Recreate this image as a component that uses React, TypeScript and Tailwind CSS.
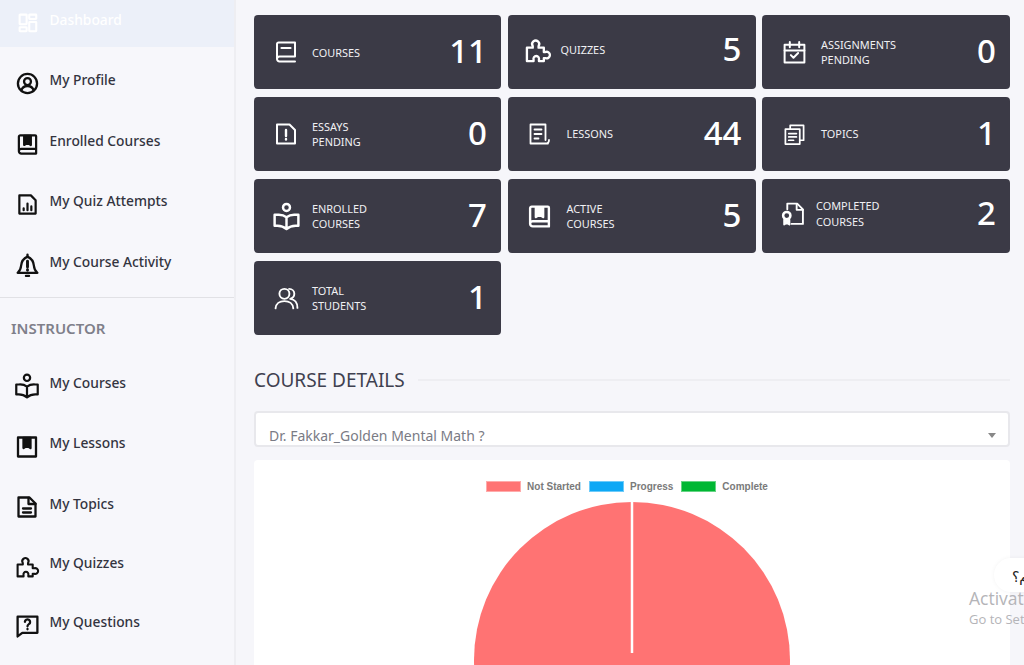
import React from "react";

type IP = { className?: string };
const S = ({ className, children, w = 1.9 }: IP & { children: React.ReactNode; w?: number }) => (
  <svg viewBox="0 0 24 24" fill="none" stroke="currentColor" strokeWidth={w} strokeLinecap="round" strokeLinejoin="round" className={className}>
    {children}
  </svg>
);

const DashIcon = ({ className }: IP) => (
  <S className={className} w={2.4}>
    <rect x="3" y="3" width="8" height="11" rx="0.5" /><rect x="14" y="3" width="8" height="5" rx="0.5" />
    <rect x="3" y="17.5" width="8" height="4.5" rx="0.5" /><rect x="14" y="11.5" width="8" height="10.5" rx="0.5" />
  </S>
);
const ProfileIcon = ({ className }: IP) => (
  <S className={className} w={2.4}>
    <circle cx="12" cy="12" r="10" /><circle cx="12" cy="10" r="3.6" /><path d="M5.5 19.2c1-3 3.5-4.6 6.5-4.6s5.5 1.6 6.5 4.6" />
  </S>
);
const BookMarkIcon = ({ className }: IP) => (
  <S className={className} w={2.3}>
    <path d="M3 19V4a1.5 1.5 0 0 1 1.500-1.500h15.500a1 1 0 0 1 1 1V21.500H5.500A2.500 2.500 0 0 1 3 19a2.500 2.500 0 0 1 2.500-2.500H21" />
    <path d="M8.500 3v9.500l3.500-2.200 3.500 2.200V3z" fill="currentColor" />
  </S>
);
const BookPlainIcon = ({ className }: IP) => (
  <S className={className} w={2}>
    <path d="M3 19V4a1.500 1.500 0 0 1 1.500-1.500H21v14H5.500A2.500 2.500 0 0 0 3 19a2.500 2.500 0 0 0 2.500 2.500H21" />
    <path d="M7.500 8h9" strokeWidth="2.200" />
  </S>
);
const ChartDocIcon = ({ className }: IP) => (
  <S className={className} w={2.3}>
    <path d="M3.500 2.500h12l5 5v14h-17z" /><path d="M8 18v-2M12 18v-7M16 18v-4" />
  </S>
);
const BellIcon = ({ className }: IP) => (
  <S className={className} w={2.2}>
    <path d="M2.500 19c2-1.500 3-3 3.300-6.500.3-4 1.700-7 6.200-9 4.500 2 5.900 5 6.200 9 .3 3.500 1.300 5 3.300 6.500z" />
    <path d="M12 8v5.500M12 16v.5" strokeWidth="2.800" />
    <path d="M10.500 22h3M12 1.500v1.500" />
  </S>
);
const ReaderIcon = ({ className }: IP) => (
  <S className={className} w={1.9}>
    <circle cx="12" cy="5" r="2.700" />
    <path d="M12 12.500c-2-1.500-4.500-2-7-1.800H2.800v8.500H5c2.500 0 5 .8 7 2.500 2-1.700 4.500-2.500 7-2.500h2.200v-8.500H19c-2.500-.2-5 .3-7 1.800zM12 12.500V21" />
  </S>
);
const LessonBookIcon = ({ className }: IP) => (
  <S className={className} w={2.3}>
    <rect x="3" y="2.500" width="18" height="19" /><path d="M8.500 3v10l3.500-2.300 3.500 2.300V3z" fill="currentColor" />
  </S>
);
const DocIcon = ({ className }: IP) => (
  <S className={className} w={2.3}>
    <path d="M3.500 2.500h11l6 6v13h-17z" /><path d="M13.500 3v6h7M8 13.500h8M8 17.500h8" />
  </S>
);
const PuzzleIcon = ({ className }: IP) => (
  <S className={className} w={2}>
    <path d="M2.500 10h5V8.600a3 3 0 1 1 5 0V10h4.500v3.700h1.500a2.800 2.800 0 1 1 0 5.300H17v2.500h-4.200v-1.300a2.400 2.400 0 1 0-4.600 0v1.300H2.500z" />
  </S>
);
const QuestionIcon = ({ className }: IP) => (
  <S className={className} w={2.200}>
    <path d="M2.500 3.500h19v15.500H7l-4.500 3.500z" />
    <path d="M9.500 8.500a2.500 2.500 0 1 1 3.800 2.200c-.9.600-1.300 1-1.300 2M12 15.300v.3" />
  </S>
);
const CalendarIcon = ({ className }: IP) => (
  <S className={className} w={1.900}>
    <rect x="2.500" y="4.500" width="19" height="17" /><path d="M2.500 10h19M7.500 2v5M16.500 2v5M8.500 14.500l2.500 2.500 4.500-4.500" />
  </S>
);
const EssayIcon = ({ className }: IP) => (
  <S className={className} w={2}>
    <path d="M3 2.500h12.500l5.500 5.500v13.500H3z" /><path d="M12 8v6M12 17v.5" strokeWidth="2.400" />
  </S>
);
const LessonsIcon = ({ className }: IP) => (
  <S className={className} w={1.800}>
    <path d="M17.500 18V2.500h-15V21.500h17.500M8 21.500h9.500c2 0 3.500-1 3.500-3.500" /><path d="M6.500 7.500h7M6.500 12h7M6.500 16.500h4" />
  </S>
);
const TopicsIcon = ({ className }: IP) => (
  <S className={className} w={1.800}>
    <path d="M7.500 6V2.500h14V18h-4" /><rect x="2.500" y="6.500" width="15" height="15.500" /><path d="M6 11h8M6 14.500h8M6 18h5" />
  </S>
);
const CertIcon = ({ className }: IP) => (
  <S className={className} w={1.800}>
    <path d="M7 8V2.500h9.500L22 8v14H11" /><path d="M16 3v5.500h6" />
    <circle cx="6.500" cy="14" r="3.500" strokeWidth="2.400" /><path d="M4 18v4.500l2.500-1.500L9 22.500V18" fill="currentColor" />
  </S>
);
const UsersIcon = ({ className }: IP) => (
  <S className={className} w={1.800}>
    <circle cx="10" cy="7.500" r="4.800" /><path d="M1.500 21.500c.3-4.500 3.800-7 8.500-7s8.200 2.500 8.500 7" />
    <path d="M14.500 2.800c3 0 5 2 5 4.700s-2 4.300-4 4.800c4.500.4 7 4 7 8.700" />
  </S>
);

type Row = { label: string; Icon: (p: IP) => React.ReactElement; icon: string; row: string };
const top: Row[] = [
  { label: "My Profile", Icon: ProfileIcon, icon: "w-[23px] h-[23px]", row: "h-[60.700px]" },
  { label: "Enrolled Courses", Icon: BookMarkIcon, icon: "w-[23px] h-[23px]", row: "h-[60.700px]" },
  { label: "My Quiz Attempts", Icon: ChartDocIcon, icon: "w-[23px] h-[23px]", row: "h-[60.700px]" },
  { label: "My Course Activity", Icon: BellIcon, icon: "w-[25px] h-[25px]", row: "h-[60.700px]" },
];
const instr: Row[] = [
  { label: "My Courses", Icon: ReaderIcon, icon: "w-[28px] h-[28px]", row: "h-[60.500px]" },
  { label: "My Lessons", Icon: LessonBookIcon, icon: "w-[24px] h-[24px]", row: "h-[60.500px]" },
  { label: "My Topics", Icon: DocIcon, icon: "w-[24px] h-[24px]", row: "h-[60px]" },
  { label: "My Quizzes", Icon: PuzzleIcon, icon: "w-[25px] h-[25px]", row: "h-[59px]" },
  { label: "My Questions", Icon: QuestionIcon, icon: "w-[25px] h-[25px]", row: "h-[59px]" },
];

const SideRow = ({ r }: { r: Row }) => (
  <div className={`flex items-center ${r.row}`}>
    <div className="ml-[9px] w-[36px] mt-[6px] flex justify-center text-[#111111]">
      <r.Icon className={r.icon} />
    </div>
    <span className="ml-[4.500px] text-[13.800px] font-medium text-[#33343f]">{r.label}</span>
  </div>
);

type Card = {
  lines: string[];
  value: string;
  Icon: (p: IP) => React.ReactElement;
  icon: string;
  left: string;
  label: string;
  pad: string;
};
const cards: Card[] = [
  { lines: ["COURSES"], value: "11", Icon: BookPlainIcon, icon: "w-[24px] h-[24px]", left: "pl-[12px]", label: "ml-[6px] mt-[2px]", pad: "" },
  { lines: ["QUIZZES"], value: "5", Icon: PuzzleIcon, icon: "w-[28px] h-[28px]", left: "pl-[10px]", label: "ml-[3px]", pad: "pb-[5px]" },
  { lines: ["ASSIGNMENTS", "PENDING"], value: "0", Icon: CalendarIcon, icon: "w-[25px] h-[25px]", left: "pl-[12px]", label: "ml-[7px]", pad: "" },
  { lines: ["ESSAYS", "PENDING"], value: "0", Icon: EssayIcon, icon: "w-[24px] h-[24px]", left: "pl-[12px]", label: "ml-[6px]", pad: "" },
  { lines: ["LESSONS"], value: "44", Icon: LessonsIcon, icon: "w-[24px] h-[24px]", left: "pl-[12px]", label: "ml-[7px]", pad: "" },
  { lines: ["TOPICS"], value: "1", Icon: TopicsIcon, icon: "w-[23px] h-[23px]", left: "pl-[12px]", label: "ml-[7px]", pad: "" },
  { lines: ["ENROLLED", "COURSES"], value: "7", Icon: ReaderIcon, icon: "w-[31px] h-[31px]", left: "pl-[12px]", label: "ml-[6px]", pad: "" },
  { lines: ["ACTIVE", "COURSES"], value: "5", Icon: BookMarkIcon, icon: "w-[25px] h-[25px]", left: "pl-[12px]", label: "ml-[7px]", pad: "" },
  { lines: ["COMPLETED", "COURSES"], value: "2", Icon: CertIcon, icon: "w-[25px] h-[25px]", left: "pl-[10px]", label: "ml-[4px]", pad: "pb-[5px]" },
  { lines: ["TOTAL", "STUDENTS"], value: "1", Icon: UsersIcon, icon: "w-[25px] h-[25px]", left: "pl-[12px]", label: "ml-[6px]", pad: "" },
];

const StatCard = ({ c }: { c: Card }) => (
  <div className={`h-[74px] bg-[#3b3a46] rounded-[4px] flex items-center text-white pr-[14px] ${c.left} ${c.pad}`}>
    <div className="w-[40px] flex justify-center shrink-0"><c.Icon className={c.icon} /></div>
    <div className={`text-[10.900px] leading-[15.500px] text-[#f1f1f4] ${c.label}`}>
      {c.lines.map((l) => <div key={l}>{l}</div>)}
    </div>
    <div className="ml-auto mb-[3px] text-[33px] font-medium leading-none">{c.value}</div>
  </div>
);

const Legend = ({ color, label }: { color: string; label: string }) => (
  <div className="flex items-center gap-[6px]">
    <span className={`w-[35px] h-[11px] border border-white/40 ${color}`} />
    <span className="text-[10px] font-bold text-[#7a7a7a] [font-family:'Liberation_Sans',sans-serif]">{label}</span>
  </div>
);

export default function App() {
  return (
    <div className="relative w-[1024px] h-[665px] overflow-hidden bg-[#f6f6fa] flex [font-family:'Noto_Sans',sans-serif]">
      <aside className="w-[236px] h-full shrink-0 bg-[#f7f7fb] border-r-2 border-[#eeeef2]">
        <div className="h-[47px] bg-[#ecf0f9] flex items-start text-white">
          <div className="ml-[9px] w-[36px] mt-[12px] flex justify-center"><DashIcon className="w-[21px] h-[21px]" /></div>
          <span className="ml-[4.500px] mt-[10px] text-[13.800px] font-medium">Dashboard</span>
        </div>
        <div className="pt-[3px]">
          {top.map((r) => <SideRow key={r.label} r={r} />)}
        </div>
        <div className="mt-[4px] border-t border-[#e1e1e5] h-0" />
        <div className="mt-[21px] ml-[11px] text-[15px] leading-[19px] font-semibold text-[#7f808a]">INSTRUCTOR</div>
        <div className="pt-[15.300px]">
          {instr.map((r) => <SideRow key={r.label} r={r} />)}
        </div>
      </aside>

      <main className="flex-1 pl-[18px] pr-[14px] pt-[15px]">
        <div className="grid grid-cols-[247px_248px_248px] gap-x-[6.500px] gap-y-[8px]">
          {cards.map((c) => <StatCard key={c.lines.join()} c={c} />)}
        </div>

        <div className="mt-[32px] flex items-center">
          <h2 className="text-[19px] leading-[26px] text-[#3f4150] whitespace-nowrap">COURSE DETAILS</h2>
          <div className="ml-[13px] flex-1 h-[2px] bg-[#eeeef2]" />
        </div>

        <div className="mt-[18px] h-[36px] bg-white border-2 border-[#e8e8ec] rounded-[4px] flex items-end pl-[13px] pr-[12px]">
          <span className="text-[14px] leading-[18px] text-[#7a7b85]">Dr. Fakkar_Golden Mental Math ?</span>
          <span className="ml-auto mb-[7px] w-0 h-0 border-x-[4px] border-x-transparent border-t-[5px] border-t-[#888888]" />
        </div>

        <div className="mt-[13px] h-[220px] bg-white rounded-[4px] pt-[19px] overflow-hidden">
          <div className="flex justify-center gap-[8px] pr-[10px] h-[15px]">
            <Legend color="bg-[#ff7373]" label="Not Started" />
            <Legend color="bg-[#0ea8f5]" label="Progress" />
            <Legend color="bg-[#00b733]" label="Complete" />
          </div>
          <svg viewBox="0 0 320 170" className="block w-[320px] h-[170px] mx-auto mt-[6px]">
            <circle cx="160" cy="160" r="158" fill="#ff7373" />
            <path d="M160 1V153" stroke="#ffffff" strokeWidth="2.500" />
          </svg>
        </div>
      </main>

      <div dir="rtl" className="absolute left-[994px] top-[558px] w-[50px] h-[34px] bg-white rounded-l-[17px] flex items-center pr-[16px] pt-[5px] text-[14px] text-[#222222] [font-family:'DejaVu_Sans',sans-serif] shadow-[0_0_4px_rgba(0,0,0,0.05)]">
        <span>م؟</span>
      </div>
      <div className="absolute left-[969px] top-[586px] w-[300px] text-[#b4b4b8] [font-family:'Open_Sans',sans-serif]">
        <div className="text-[17.500px] leading-[24px]">Activate Windows</div>
        <div className="text-[13px] leading-[18px]">Go to Settings to activate Windows.</div>
      </div>
    </div>
  );
}
